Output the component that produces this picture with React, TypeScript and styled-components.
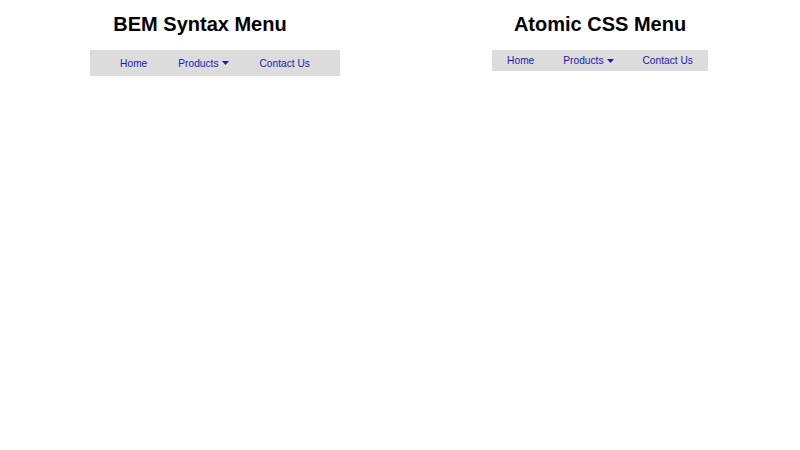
import React from "react";
import styled, { createGlobalStyle } from "styled-components";

const Global = createGlobalStyle`
  html, body { margin: 0; padding: 0; background: #fff; }
  body { font-family: "Liberation Sans", Arial, sans-serif; }
`;

const Page = styled.div`
  display: grid;
  grid-template-columns: 400px 400px;
  width: 800px;
`;

const Column = styled.section`
  display: flex;
  flex-direction: column;
  align-items: center;
`;

const Title = styled.h1`
  margin: 12px 0 0;
  font-size: 20px;
  line-height: 24px;
  font-weight: 700;
  color: #000;
`;

const Nav = styled.nav<{ $h: number; $pad: number; $gap: number; $shift: number }>`
  margin: 14px 0 0 ${(p) => p.$shift}px;
  height: ${(p) => p.$h}px;
  padding: 0 ${(p) => p.$pad}px;
  background: #dcdcdc;
  display: flex;
  align-items: center;
  gap: ${(p) => p.$gap}px;
`;

const Link = styled.a`
  font-size: 10.2px;
  color: #1a1ab8;
  text-decoration: none;
  display: inline-flex;
  align-items: center;
  gap: 3px;
  cursor: pointer;
`;

const Caret = () => (
  <svg width="7" height="4" viewBox="0 0 7 4">
    <path d="M0 0 L7 0 L3.5 4 Z" fill="#1a1ab8" />
  </svg>
);

function Menu({ h, pad, gap, shift }: { h: number; pad: number; gap: number; shift: number }) {
  return (
    <Nav $h={h} $pad={pad} $gap={gap} $shift={shift}>
      <Link>Home</Link>
      <Link>
        Products <Caret />
      </Link>
      <Link>Contact Us</Link>
    </Nav>
  );
}

export default function App() {
  return (
    <>
      <Global />
      <Page>
        <Column>
          <Title>BEM Syntax Menu</Title>
          <Menu h={26} pad={30} gap={31} shift={30} />
        </Column>
        <Column>
          <Title>Atomic CSS Menu</Title>
          <Menu h={21} pad={15} gap={29} shift={0} />
        </Column>
      </Page>
    </>
  );
}
